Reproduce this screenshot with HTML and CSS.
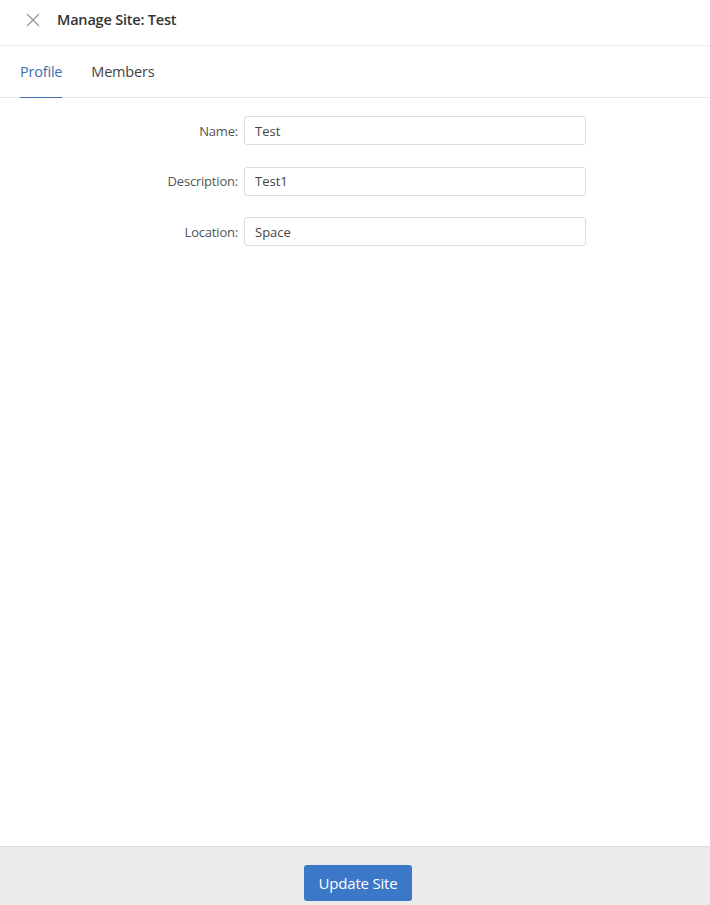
FILE: index.html
```html
<!DOCTYPE html>
<html>
<head>
<meta charset="utf-8">
<link rel="stylesheet" href="styles.css">
</head>
<body>
<div class="page">
  <header class="header">
    <button class="close" aria-label="Close">
      <svg width="14" height="14" viewBox="0 0 14 14"><path d="M1 1L13 13M13 1L1 13" stroke="#9a9a9a" stroke-width="1.4" fill="none"/></svg>
    </button>
    <h1 class="title">Manage Site: Test</h1>
  </header>
  <nav class="tabs">
    <div class="tab active">Profile</div>
    <div class="tab">Members</div>
  </nav>
  <main class="content">
    <form class="form">
      <div class="row"><label class="label">Name:</label><input class="input" value="Test"></div>
      <div class="row"><label class="label">Description:</label><input class="input" value="Test1"></div>
      <div class="row"><label class="label">Location:</label><input class="input" value="Space"></div>
    </form>
  </main>
  <footer class="footer">
    <button class="primary">Update Site</button>
  </footer>
</div>
</body>
</html>
```

FILE: styles.css
```css
* { box-sizing: border-box; }
html, body { margin: 0; padding: 0; height: 100%; }
body { font-family: "Open Sans", "Noto Sans", sans-serif; color: #333; background: #fff; }
.page { display: flex; flex-direction: column; height: 905px; }
.header { height: 46px; display: flex; align-items: center; padding-left: 26px; padding-bottom: 6px; border-bottom: 1px solid #ececec; flex: none; }
.close { background: none; border: 0; padding: 0; width: 14px; height: 14px; display: flex; margin-right: 17px; }
.title { margin: 0; font-size: 14.5px; font-weight: 600; color: #333; letter-spacing: -0.2px; }
.tabs { height: 52px; display: flex; padding-left: 20px; gap: 29px; border-bottom: 1px solid #e8e8e8; flex: none; }
.tab { font-size: 14.5px; color: #444; display: flex; align-items: center; padding-bottom: 1px; border-bottom: 1px solid transparent; margin-bottom: -1px; letter-spacing: -0.2px; }
.tab.active { color: #3d6db3; border-bottom-color: #3d6db3; }
.content { flex: 1; padding-top: 18px; }
.form { display: flex; flex-direction: column; gap: 21.5px; }
.row { display: flex; align-items: center; height: 29px; }
.label { width: 244px; text-align: right; padding-right: 6px; font-size: 13px; color: #555; letter-spacing: -0.2px; }
.input { width: 342px; height: 29px; border: 1px solid #dcdcdc; border-radius: 3px; padding: 0 10px; font-family: inherit; font-size: 13px; color: #444; outline: none; }
.footer { height: 59px; background: #ebebeb; border-top: 1px solid #dedede; display: flex; justify-content: center; align-items: flex-end; padding-bottom: 4px; padding-left: 6px; flex: none; }
.primary { width: 108px; height: 36px; background: #3c78c8; color: #fff; border: 0; border-radius: 3px; font-family: inherit; font-size: 15px; letter-spacing: -0.2px; }
```
